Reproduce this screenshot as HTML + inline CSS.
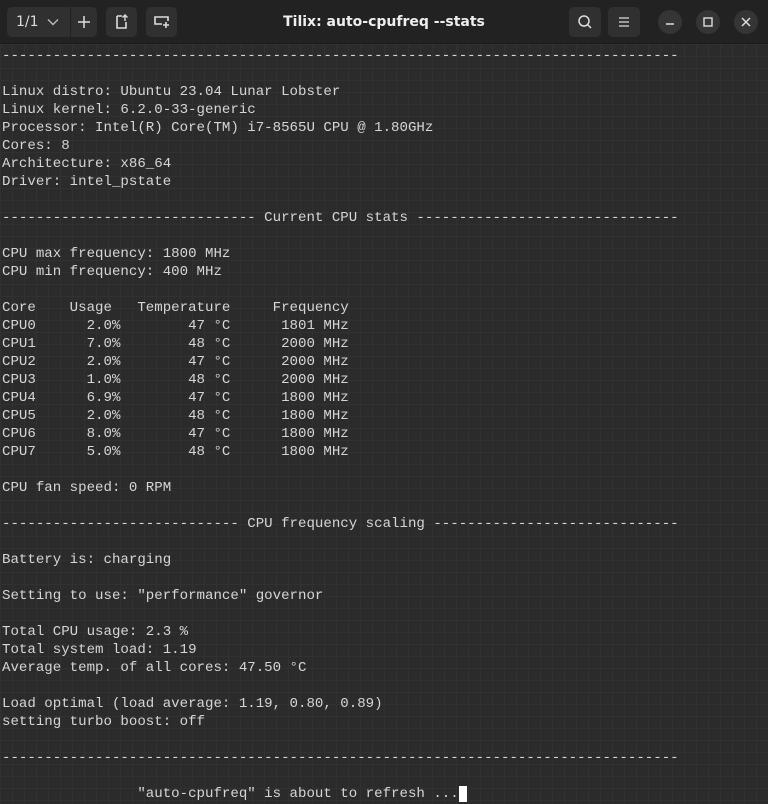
<!DOCTYPE html>
<html><head><meta charset="utf-8"><style>
*{margin:0;padding:0;box-sizing:border-box}
html,body{width:768px;height:804px;overflow:hidden;background:#2b2b2b}
.hdr{position:absolute;left:0;top:0;width:768px;height:44px;background:#222;border-bottom:1px solid #1a1a1a}
.b{position:absolute;top:7px;height:30px;background:#303030;border-radius:5px;color:#ddd;font:15px "DejaVu Sans",sans-serif;display:flex;align-items:center;justify-content:center}
.c{position:absolute;top:10px;width:24px;height:24px;border-radius:50%;background:#353535}
.title{position:absolute;top:0;left:0;width:768px;height:44px;text-align:center;color:#eee;font:bold 14px "DejaVu Sans",sans-serif;line-height:44px}
.term{position:absolute;left:0;top:44px;width:768px;height:760px;
background-color:#2b2b2b;
background-image:linear-gradient(#313131 1px,transparent 1px),linear-gradient(90deg,#313131 1px,transparent 1px);
background-size:12px 12px;background-position:0 0}
pre{position:absolute;left:2px;top:3px;font:14.1px/18px "Liberation Mono",monospace;color:#d6d6d6;white-space:pre}
.cur{background:#fff;color:#fff}
</style></head><body>
<div class="hdr">
<div class="b" style="left:7px;width:90px;justify-content:flex-start">
<span style="margin-left:9px;font-size:14px">1/1</span>
<svg style="margin-left:8px" width="12" height="8" viewBox="0 0 12 8"><path d="M1 1.5L6 6.5L11 1.5" stroke="#bbb" stroke-width="1.4" fill="none"/></svg>
<div style="position:absolute;left:63px;top:0;width:1px;height:30px;background:#222"></div>
<svg style="position:absolute;left:70px;top:8px" width="14" height="14"><path d="M7 1v12M1 7h12" stroke="#ddd" stroke-width="1.5"/></svg>
</div>
<div class="b" style="left:106px;width:31px"><svg width="14" height="16" viewBox="0 0 14 16"><path d="M2 2h5M2 2v12h9V8" stroke="#ddd" stroke-width="1.6" fill="none"/><path d="M10 1v6M7.5 3.5L10 1l2.5 2.5" stroke="#ddd" stroke-width="1.4" fill="none"/></svg></div>
<div class="b" style="left:146px;width:31px"><svg width="18" height="14" viewBox="0 0 18 14"><path d="M9 9H2V2h13v4" stroke="#ddd" stroke-width="1.6" fill="none"/><path d="M13 7v6M10 10h6" stroke="#ddd" stroke-width="1.6"/></svg></div>
<div class="title">Tilix: auto-cpufreq --stats</div>
<div class="b" style="left:569px;width:32px"><svg width="16" height="16"><circle cx="7" cy="7" r="5" stroke="#ddd" stroke-width="1.5" fill="none"/><path d="M10.5 10.5L14 14" stroke="#ddd" stroke-width="1.5"/></svg></div>
<div class="b" style="left:608px;width:32px"><svg width="14" height="12"><path d="M2 2h10M2 6h10M2 10h10" stroke="#ddd" stroke-width="1.3"/></svg></div>
<div class="c" style="left:658px"><svg width="24" height="24"><path d="M8 14h8" stroke="#ddd" stroke-width="1.5"/></svg></div>
<div class="c" style="left:696px"><svg width="24" height="24"><rect x="8" y="8" width="8" height="8" stroke="#ddd" stroke-width="1.4" fill="none"/></svg></div>
<div class="c" style="left:734px"><svg width="24" height="24"><path d="M8 8l8 8M16 8l-8 8" stroke="#ddd" stroke-width="1.5"/></svg></div>
</div>
<div class="term"><pre>--------------------------------------------------------------------------------

Linux distro: Ubuntu 23.04 Lunar Lobster
Linux kernel: 6.2.0-33-generic
Processor: Intel(R) Core(TM) i7-8565U CPU @ 1.80GHz
Cores: 8
Architecture: x86_64
Driver: intel_pstate

------------------------------ Current CPU stats -------------------------------

CPU max frequency: 1800 MHz
CPU min frequency: 400 MHz

Core    Usage   Temperature     Frequency
CPU0      2.0%        47 °C      1801 MHz
CPU1      7.0%        48 °C      2000 MHz
CPU2      2.0%        47 °C      2000 MHz
CPU3      1.0%        48 °C      2000 MHz
CPU4      6.9%        47 °C      1800 MHz
CPU5      2.0%        48 °C      1800 MHz
CPU6      8.0%        47 °C      1800 MHz
CPU7      5.0%        48 °C      1800 MHz

CPU fan speed: 0 RPM

---------------------------- CPU frequency scaling -----------------------------

Battery is: charging

Setting to use: "performance" governor

Total CPU usage: 2.3 %
Total system load: 1.19
Average temp. of all cores: 47.50 °C

Load optimal (load average: 1.19, 0.80, 0.89)
setting turbo boost: off

--------------------------------------------------------------------------------

                "auto-cpufreq" is about to refresh ...<span class="cur"> </span></pre></div>
</body></html>
